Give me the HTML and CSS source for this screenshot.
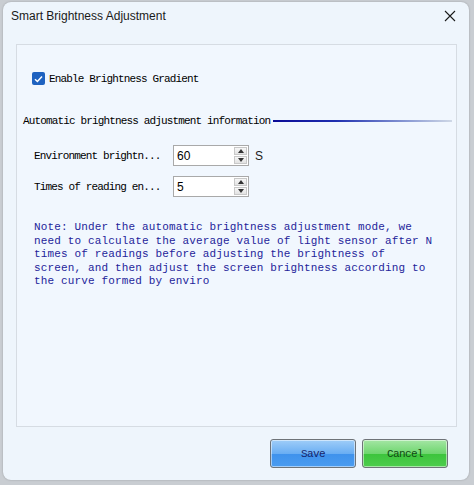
FILE: index.html
```html
<!DOCTYPE html>
<html lang="en">
<head>
  <meta charset="UTF-8" />
  <title>Smart Brightness Adjustment</title>
  <link rel="stylesheet" href="styles.css">
</head>
<body>
  <div class="window">
    <div class="titlebar">
      <span class="title">Smart Brightness Adjustment</span>
      <svg class="close" width="12" height="12" viewBox="0 0 12 12">
        <path d="M1 1 L11 11 M11 1 L1 11" stroke="#1b1b1b" stroke-width="1.1" fill="none"/>
      </svg>
    </div>

    <div class="panel">
      <label class="check-row">
        <span class="checkbox">
          <svg width="9" height="8" viewBox="0 0 9 8">
            <path d="M1 4.2 L3.4 6.5 L8 1.5" stroke="#fff" stroke-width="1.5" fill="none"/>
          </svg>
        </span>
        <span class="mono">Enable Brightness Gradient</span>
      </label>

      <div class="section">
        <span class="mono">Automatic brightness adjustment information</span>
        <div class="section-line"></div>
      </div>

      <div class="field">
        <span class="mono field-label">Environment brightn...</span>
        <div class="spin">
          <span class="spin-value">60</span>
          <div class="spin-buttons">
            <span class="spin-btn up"></span>
            <span class="spin-btn down"></span>
          </div>
        </div>
        <span class="unit">S</span>
      </div>

      <div class="field second">
        <span class="mono field-label">Times of reading en...</span>
        <div class="spin">
          <span class="spin-value">5</span>
          <div class="spin-buttons">
            <span class="spin-btn up"></span>
            <span class="spin-btn down"></span>
          </div>
        </div>
      </div>

      <p class="note">Note: Under the automatic brightness adjustment mode, we<br>need to calculate the average value of light sensor after N<br>times of readings before adjusting the brightness of<br>screen, and then adjust the screen brightness according to<br>the curve formed by enviro</p>
    </div>

    <div class="actions">
      <button class="btn save">Save</button>
      <button class="btn cancel">Cancel</button>
    </div>
  </div>
</body>
</html>
```

FILE: styles.css
```css
body {
  margin: 0;
  background: #c9cdd2;
  width: 474px;
  height: 485px;
  overflow: hidden;
}
.window {
  margin: 2px 0 0 3px;
  width: 466px;
  height: 478px;
  background: #eef5fc;
  border-radius: 8px;
  box-shadow: 0 0 2px rgba(0, 0, 0, 0.25);
  display: flex;
  flex-direction: column;
  overflow: hidden;
}
.titlebar {
  height: 28px;
  padding: 0 8px 14px 8px;
  display: flex;
  align-items: center;
  justify-content: space-between;
}
.title {
  font-family: "Liberation Sans", sans-serif;
  font-size: 12px;
  color: #1a1a1a;
}
.close {
  margin-right: 5px;
}
.panel {
  margin: 0 12px 0 13px;
  height: 381px;
  border: 1px solid #d6dce3;
  background: #f1f7fe;
  padding: 0;
}
.mono {
  font-family: "Liberation Mono", "DejaVu Sans Mono", monospace;
  font-size: 11px;
  letter-spacing: -0.85px;
  color: #000;
  white-space: nowrap;
}
.check-row {
  display: flex;
  align-items: center;
  height: 13px;
  margin: 27px 0 0 15px;
}
.checkbox {
  width: 13px;
  height: 13px;
  border-radius: 2px;
  background: #1e62c0;
  display: flex;
  align-items: center;
  justify-content: center;
  margin-right: 4px;
}
.section {
  display: flex;
  align-items: center;
  height: 14px;
  margin: 29px 4px 0 6px;
}
.section-line {
  flex: 1;
  height: 2px;
  margin-left: 3px;
  background: linear-gradient(to right, #0b0b96, #1f2fb0 35%, #8a9ad4 75%, #cfd8e6);
}
.field {
  display: flex;
  align-items: center;
  height: 21px;
  margin: 17px 0 0 17px;
}
.field.second {
  margin-top: 10px;
}
.field-label {
  width: 139px;
}
.spin {
  width: 74px;
  height: 19px;
  border: 1px solid #a9a9a9;
  background: #fff;
  display: flex;
  align-items: center;
  justify-content: space-between;
}
.spin-value {
  font-family: "Liberation Sans", sans-serif;
  font-size: 12px;
  color: #000;
  padding-left: 3px;
}
.spin-buttons {
  display: flex;
  flex-direction: column;
  gap: 1px;
  margin-right: 1px;
}
.spin-btn {
  width: 13px;
  height: 8px;
  background: linear-gradient(#f7f7f7, #e2e2e2);
  border: 1px solid #c8c8c8;
  box-sizing: border-box;
  position: relative;
}
.spin-btn::after {
  content: "";
  position: absolute;
  left: 3px;
  top: 1px;
  border-left: 3px solid transparent;
  border-right: 3px solid transparent;
}
.spin-btn.up::after {
  border-bottom: 4px solid #333;
}
.spin-btn.down::after {
  border-top: 4px solid #333;
}
.unit {
  font-family: "Liberation Sans", sans-serif;
  font-size: 12px;
  color: #222;
  margin-left: 6px;
}
.note {
  margin: 24px 0 0 17px;
  font-family: "Liberation Mono", "DejaVu Sans Mono", monospace;
  font-size: 11px;
  line-height: 13.5px;
  letter-spacing: 0.15px;
  color: #24249a;
  white-space: nowrap;
}
.actions {
  display: flex;
  justify-content: flex-end;
  gap: 6px;
  margin: 12px 21px 0 0;
}
.btn {
  width: 86px;
  height: 29px;
  border: 1px solid #6e7378;
  border-radius: 3px;
  font-family: "Liberation Mono", "DejaVu Sans Mono", monospace;
  font-size: 11px;
  letter-spacing: -0.6px;
  cursor: pointer;
  box-shadow: inset 0 0 0 1px rgba(255, 255, 255, 0.5);
}
.save {
  background: linear-gradient(#9fcdf8, #6aaef3 50%, #3f92ec 52%, #4a9cf0);
  color: #16246b;
}
.cancel {
  background: linear-gradient(#a4e6a4, #6fd66f 50%, #3cc43c 52%, #4dcd4d);
  color: #0f4a12;
}
```
